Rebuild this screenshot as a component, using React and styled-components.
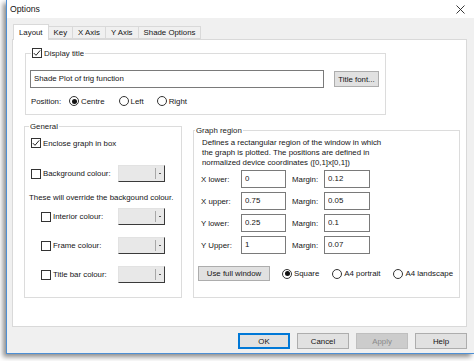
import React from 'react';
import styled, { createGlobalStyle } from 'styled-components';

const GlobalStyle = createGlobalStyle`
  html, body {
    margin: 0;
    padding: 0;
    background: #fff;
  }
  body {
    font-family: "Liberation Sans", Arial, sans-serif;
    font-size: 7.85px;
    color: #151515;
  }
`;

const Screen = styled.div`
  width: 474px;
  height: 361px;
  overflow: hidden;
  padding-left: 6px;
  box-sizing: border-box;
  background: #fff;
`;

const Window = styled.div`
  box-sizing: border-box;
  width: 468px;
  height: 354px;
  border-left: 1px solid #4d8fd4;
  border-bottom: 1px solid #4d8fd4;
  box-shadow: -3px 3px 5px rgba(0, 0, 0, 0.45);
  display: flex;
  flex-direction: column;
  background: #f0f0f0;
`;

const TitleBar = styled.div`
  height: 18px;
  flex: none;
  background: #fff;
  display: flex;
  align-items: center;
  justify-content: space-between;
  padding: 0 9px 0 3px;
  font-size: 8.7px;
`;

const Body = styled.div`
  flex: 1;
  display: flex;
  flex-direction: column;
  padding: 6px 7px 0 5px;
`;

const TabRow = styled.div`
  height: 15px;
  display: flex;
  align-items: flex-end;
  padding-left: 1px;
`;

const Tab = styled.div`
  box-sizing: border-box;
  height: ${p => (p.$active ? 16 : 13)}px;
  margin-bottom: ${p => (p.$active ? -1 : 0)}px;
  padding: 0 5px;
  display: flex;
  align-items: center;
  background: ${p => (p.$active ? '#fff' : '#f0f0f0')};
  border: 1px solid #d9d9d9;
  border-bottom: ${p => (p.$active ? 'none' : '1px solid #d9d9d9')};
  margin-left: ${p => (p.$first ? 0 : -1)}px;
  position: relative;
  z-index: ${p => (p.$active ? 2 : 1)};
`;

const Panel = styled.div`
  box-sizing: border-box;
  height: 288px;
  background: #fff;
  border: 1px solid #d9d9d9;
  padding: 13px 8px 0 11px;
  display: flex;
  flex-direction: column;
`;

const Group = styled.div`
  position: relative;
  box-sizing: border-box;
  flex: none;
  border: 1px solid #dcdcdc;
  width: ${p => p.$w}px;
  height: ${p => p.$h}px;
  margin-top: ${p => p.$top || 0}px;
  margin-left: ${p => p.$left || 0}px;
  padding: ${p => p.$pad};
  display: flex;
  flex-direction: column;
`;

const Legend = styled.div`
  position: absolute;
  top: -7px;
  left: ${p => p.$x}px;
  height: 12px;
  padding: 0 1px;
  background: #fff;
  display: flex;
  align-items: center;
  gap: 2px;
  color: #222;
`;

const Columns = styled.div`
  display: flex;
  align-items: flex-start;
  gap: 11px;
`;

const Line = styled.div`
  display: flex;
  align-items: center;
  flex: none;
  height: ${p => p.$h || 12}px;
  margin-top: ${p => p.$top || 0}px;
  margin-left: ${p => p.$shift || 0}px;
  padding-left: ${p => p.$indent || 0}px;
  padding-right: ${p => p.$right || 0}px;
  gap: ${p => p.$gap || 0}px;
`;

const Label = styled.span`
  flex: none;
  width: ${p => (p.$w ? `${p.$w}px` : 'auto')};
  margin-left: ${p => p.$ml || 0}px;
  white-space: nowrap;
`;

const Field = styled.input`
  box-sizing: border-box;
  flex: none;
  width: ${p => p.$w}px;
  height: 18px;
  margin: 0;
  padding: 0 0 2px 3px;
  border: 1px solid #7a7a7a;
  background: #fff;
  font: inherit;
  color: #151515;
  outline: none;
`;

const Button = styled.button`
  box-sizing: border-box;
  flex: none;
  width: ${p => p.$w}px;
  height: ${p => p.$h || 16}px;
  margin: 0;
  padding: 0;
  font: inherit;
  color: ${p => (p.$disabled ? '#8a8a8a' : '#151515')};
  background: ${p => (p.$disabled ? '#cccccc' : '#e1e1e1')};
  border: 1px solid ${p => (p.$focus ? '#0078d7' : p.$disabled ? '#bfbfbf' : '#adadad')};
  box-shadow: ${p => (p.$focus ? 'inset 0 0 0 1px #0078d7' : 'none')};
`;

const Box = styled.span`
  box-sizing: border-box;
  flex: none;
  width: 10px;
  height: 10px;
  border: 1px solid #333;
  background: #fff;
  display: inline-flex;
  align-items: center;
  justify-content: center;
`;

const Circle = styled.span`
  box-sizing: border-box;
  flex: none;
  width: 10px;
  height: 10px;
  border-radius: 50%;
  border: 1px solid #333;
  background: #fff;
  display: inline-flex;
  align-items: center;
  justify-content: center;
  &::after {
    content: '';
    width: 5px;
    height: 5px;
    border-radius: 50%;
    background: #111;
    display: ${p => (p.$on ? 'block' : 'none')};
  }
`;

const Option = styled.span`
  display: flex;
  align-items: center;
  gap: 2px;
  flex: none;
  margin-left: ${p => p.$ml || 0}px;
`;

const Swatch = styled.span`
  box-sizing: border-box;
  flex: none;
  width: 47px;
  height: 17px;
  margin-left: auto;
  background: #e8e8e8;
  border-top: 1px solid #e2e2e2;
  border-left: 1px solid #e2e2e2;
  border-right: 1px solid #3a3a3a;
  border-bottom: 1px solid #3a3a3a;
  display: flex;
  justify-content: flex-end;
  align-items: center;
`;

const SwatchArrow = styled.span`
  position: relative;
  width: 7px;
  height: 11px;
  border-left: 1px solid #a8a8a8;
  margin-right: 1px;
  &::after {
    content: '';
    position: absolute;
    left: 3px;
    top: 5px;
    width: 2px;
    height: 1px;
    background: #555;
  }
`;

const Description = styled.div`
  margin-top: 7px;
  padding-left: 1px;
  line-height: 10px;
  width: 255px;
`;

const Rows = styled.div`
  display: flex;
  flex-direction: column;
  gap: 4px;
  margin-top: 2px;
`;

const Footer = styled.div`
  display: flex;
  justify-content: flex-end;
  gap: 7px;
  margin-top: 6px;
`;

function Check({ checked }) {
  return (
    <Box>
      {checked && (
        <svg width="8" height="8" viewBox="0 0 8 8">
          <path d="M0.8 4.1 L3 6.3 L7.2 1.4" fill="none" stroke="#222" strokeWidth="1" />
        </svg>
      )}
    </Box>
  );
}

function Radio({ on, label, ml }) {
  return (
    <Option $ml={ml}>
      <Circle $on={on} />
      <span>{label}</span>
    </Option>
  );
}

function ColourRow({ label, indent, top, checked }) {
  return (
    <Line $h={17} $top={top} $indent={indent} $right={16}>
      <Check checked={checked} />
      <Label $ml={2}>{label}</Label>
      <Swatch>
        <SwatchArrow />
      </Swatch>
    </Line>
  );
}

const regionRows = [
  ['X lower:', '0', '0.12'],
  ['X upper:', '0.75', '0.05'],
  ['Y lower:', '0.25', '0.1'],
  ['Y Upper:', '1', '0.07'],
];

const tabs = ['Layout', 'Key', 'X Axis', 'Y Axis', 'Shade Options'];

export default function App() {
  return (
    <Screen>
      <GlobalStyle />
      <Window>
        <TitleBar>
          <span>Options</span>
          <svg width="9" height="9" viewBox="0 0 9 9">
            <path d="M0.5 0.5 L8.5 8.5 M8.5 0.5 L0.5 8.5" stroke="#222" strokeWidth="0.9" />
          </svg>
        </TitleBar>
        <Body>
          <TabRow>
            {tabs.map((t, i) => (
              <Tab key={t} $active={i === 0} $first={i === 0}>
                {t}
              </Tab>
            ))}
          </TabRow>
          <Panel>
            <Group $w={361} $h={62} $left={1} $pad="16px 0 0 4px">
              <Legend $x={5}>
                <Check checked />
                <span>Display title</span>
              </Legend>
              <Line $h={18} $gap={10}>
                <Field $w={294} defaultValue="Shade Plot of trig function" readOnly />
                <Button $w={45} $h={16}>Title font...</Button>
              </Line>
              <Line $top={7} $indent={1}>
                <Label $w={38}>Position:</Label>
                <Radio on label="Centre" />
                <Radio label="Left" ml={14} />
                <Radio label="Right" ml={13} />
              </Line>
            </Group>
            <Columns>
              <Group $w={158} $h={172} $top={11} $pad="10px 0 0 0">
                <Legend $x={4}>General</Legend>
                <Line $indent={6}>
                  <Check checked />
                  <Label $ml={2}>Enclose graph in box</Label>
                </Line>
                <ColourRow label="Background colour:" indent={6} top={16} />
                <Line $top={10} $indent={4} $h={10}>
                  These will override the backgound colour.
                </Line>
                <ColourRow label="Interior colour:" indent={16} top={6} />
                <ColourRow label="Frame colour:" indent={16} top={12} />
                <ColourRow label="Title bar colour:" indent={16} top={12} />
              </Group>
              <Group $w={267} $h={168} $top={15} $pad="0 0 0 7px">
                <Legend $x={1}>Graph region</Legend>
                <Description>
                  Defines a rectangular region of the window in which
                  <br />
                  the graph is plotted. The positions are defined in
                  <br />
                  normalized device coordinates ([0,1]x[0,1])
                </Description>
                <Rows>
                  {regionRows.map(([name, value, margin]) => (
                    <Line key={name} $h={18}>
                      <Label $w={40}>{name}</Label>
                      <Field $w={45} defaultValue={value} readOnly />
                      <Label $w={32} $ml={6}>Margin:</Label>
                      <Field $w={46} defaultValue={margin} readOnly />
                    </Line>
                  ))}
                </Rows>
                <Line $h={15} $top={12} $shift={-3}>
                  <Button $w={72} $h={15}>Use full window</Button>
                  <Radio on label="Square" ml={12} />
                  <Radio label="A4 portrait" ml={13} />
                  <Radio label="A4 landscape" ml={13} />
                </Line>
              </Group>
            </Columns>
          </Panel>
          <Footer>
            <Button $w={52} $focus>OK</Button>
            <Button $w={52}>Cancel</Button>
            <Button $w={52} $disabled>Apply</Button>
            <Button $w={52}>Help</Button>
          </Footer>
        </Body>
      </Window>
    </Screen>
  );
}
